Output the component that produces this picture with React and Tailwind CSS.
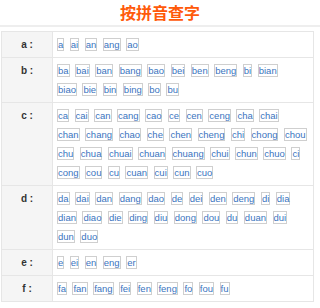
import React from "react";

const rows = [
  ["a", ["a ai an ang ao"]],
  ["b", ["ba bai ban bang bao bei ben beng bi bian", "biao bie bin bing bo bu"]],
  ["c", [
    "ca cai can cang cao ce cen ceng cha chai",
    "chan chang chao che chen cheng chi chong chou",
    "chu chua chuai chuan chuang chui chun chuo ci",
    "cong cou cu cuan cui cun cuo",
  ]],
  ["d", [
    "da dai dan dang dao de dei den deng di dia",
    "dian diao die ding diu dong dou du duan dui",
    "dun duo",
  ]],
  ["e", ["e ei en eng er"]],
  ["f", ["fa fan fang fei fen feng fo fou fu"]],
];

export default function App() {
  return (
    <div className="w-[320px] h-[308px] bg-white overflow-hidden" style={{ fontFamily: '"Liberation Sans", Arial, sans-serif' }}>
      <div className="h-[27px] border-b-2 border-[#eeeeee] flex items-start justify-center pt-[1px]">
        <h1 className="text-[16px] leading-[22px] font-bold text-[#ff5a0a]" style={{ fontFamily: '"Noto Sans CJK SC", sans-serif' }}>按拼音查字</h1>
      </div>
      <div className="mt-[4px] ml-[1px] w-[313px] border border-[#e6e6e6]">
        {rows.map(([k, lines], i) => (
          <div key={k} className={"flex " + (i > 0 ? "border-t border-[#e6e6e6]" : "")}>
            <div className="w-[51px] shrink-0 bg-[#f5f5f5] border-r border-[#e6e6e6] text-center text-[10px] font-bold text-[#333] pt-[6px] leading-[13px]">
              {k} :
            </div>
            <div className="flex-1 flex flex-col gap-y-[6px] pl-[4px] pr-[2px] pt-[6px] pb-[6px]">
              {lines.map((line) => (
                <div key={line} className="flex gap-x-[5.5px]">
                  {line.split(" ").map((t) => (
                    <span key={t} className="border border-[#cfcfcf] text-[9.5px] leading-[11px] px-0 text-[#3a74c0] bg-white">
                      {t}
                    </span>
                  ))}
                </div>
              ))}
            </div>
          </div>
        ))}
      </div>
    </div>
  );
}
